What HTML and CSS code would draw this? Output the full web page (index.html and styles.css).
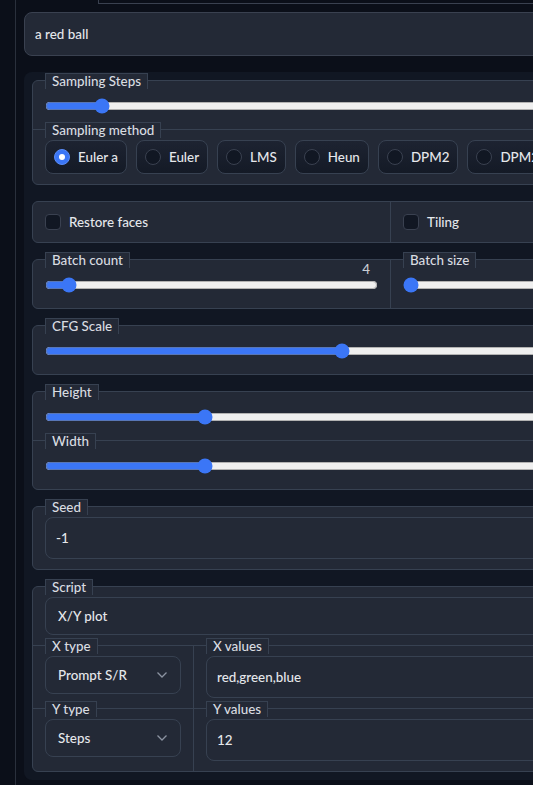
FILE: index.html
```html
<!DOCTYPE html>
<html lang="en">
<head>
<meta charset="utf-8">
<title>txt2img</title>
<link rel="stylesheet" href="styles.css">
</head>
<body>
<div class="frame">
  <div class="topstub"></div>
  <div class="prompt">a red ball</div>
  <div class="panel">
    <div class="form">
      <div class="block">
        <div class="blabel">Sampling Steps</div>
        <input class="range" type="range" min="0" max="682" value="49">
      </div>
      <div class="block">
        <div class="blabel">Sampling method</div>
        <div class="radios">
          <label class="radio selected"><span class="dot"></span>Euler a</label>
          <label class="radio"><span class="dot"></span>Euler</label>
          <label class="radio"><span class="dot"></span>LMS</label>
          <label class="radio"><span class="dot"></span>Heun</label>
          <label class="radio"><span class="dot"></span>DPM2</label>
          <label class="radio"><span class="dot"></span>DPM2 a</label>
          <label class="radio"><span class="dot"></span>DPM fast</label>
        </div>
      </div>
    </div>

    <div class="form cols">
      <label class="block check"><span class="box"></span>Restore faces</label>
      <label class="block check"><span class="box"></span>Tiling</label>
    </div>

    <div class="form cols">
      <div class="block">
        <div class="head"><div class="blabel">Batch count</div><span class="num">4</span></div>
        <input class="range" type="range" min="0" max="316" value="16">
      </div>
      <div class="block">
        <div class="head"><div class="blabel">Batch size</div><span class="num">1</span></div>
        <input class="range" type="range" min="0" max="325" value="0">
      </div>
    </div>

    <div class="form">
      <div class="block">
        <div class="blabel">CFG Scale</div>
        <input class="range" type="range" min="0" max="682" value="289">
      </div>
    </div>

    <div class="form">
      <div class="block">
        <div class="blabel">Height</div>
        <input class="range" type="range" min="0" max="682" value="152">
      </div>
      <div class="block">
        <div class="blabel">Width</div>
        <input class="range" type="range" min="0" max="682" value="152">
      </div>
    </div>

    <div class="form">
      <div class="block">
        <div class="blabel">Seed</div>
        <div class="textbox">-1</div>
      </div>
    </div>

    <div class="form">
      <div class="block">
        <div class="blabel">Script</div>
        <div class="select">X/Y plot</div>
      </div>
      <div class="row2">
        <div class="block">
          <div class="blabel">X type</div>
          <div class="select">Prompt S/R
            <svg class="chev" width="10" height="6" viewBox="0 0 10 6"><polyline points="0.5,0.5 5,5 9.5,0.5" fill="none" stroke="#8b93a1" stroke-width="1.3"/></svg>
          </div>
        </div>
        <div class="block">
          <div class="blabel">X values</div>
          <div class="textbox">red,green,blue</div>
        </div>
      </div>
      <div class="row2">
        <div class="block">
          <div class="blabel">Y type</div>
          <div class="select">Steps
            <svg class="chev" width="10" height="6" viewBox="0 0 10 6"><polyline points="0.5,0.5 5,5 9.5,0.5" fill="none" stroke="#8b93a1" stroke-width="1.3"/></svg>
          </div>
        </div>
        <div class="block">
          <div class="blabel">Y values</div>
          <div class="textbox">12</div>
        </div>
      </div>
    </div>
  </div>
</div>
</body>
</html>
```

FILE: styles.css
```css
html, body {
  margin: 0;
  padding: 0;
  background: #0b0f19;
  overflow: hidden;
  width: 533px;
  height: 785px;
}

body {
  font-family: Lato, "Liberation Sans", sans-serif;
  font-size: 13.4px;
  font-weight: 500;
  color: #e5e7eb;
}

.frame {
  margin-left: 15px;
  width: 741px;
  border-left: 1px solid #2a303c;
  padding-left: 8px;
  min-height: 785px;
}

.topstub {
  margin-left: 74px;
  height: 3px;
  border-left: 1px solid #3a4150;
  border-bottom: 1px solid #3a4150;
}

.prompt {
  margin-top: 8px;
  height: 42px;
  border: 1px solid #3a4150;
  border-radius: 8px;
  background: #232936;
  padding-left: 10px;
  display: flex;
  align-items: center;
  line-height: 16px;
}

.panel {
  margin-top: 16px;
  width: 724px;
  background: #111723;
  border-radius: 8px;
  padding: 8px;
  display: flex;
  flex-direction: column;
  gap: 16px;
}

.form {
  border: 1px solid #374151;
  border-radius: 6px;
  background: #232936;
  display: flex;
  flex-direction: column;
}

.form.cols {
  display: grid;
  grid-template-columns: 357px 1fr;
}

.block {
  padding: 0 12px;
  display: flex;
  flex-direction: column;
  align-items: stretch;
  min-width: 0;
}

.form > .block + .block {
  border-top: 1px solid #374151;
}

.form.cols > .block + .block {
  border-top: 0;
  border-left: 1px solid #374151;
}

.blabel {
  align-self: flex-start;
  margin-top: -8px;
  border: 1px solid #374151;
  border-bottom: 0;
  background: #232936;
  padding: 0 6px;
  line-height: 15px;
  height: 15px;
  color: #d9dce1;
  white-space: nowrap;
}

.head {
  display: flex;
  justify-content: space-between;
  align-items: flex-start;
  height: 16px;
  margin-top: -8px;
}

.head .blabel {
  margin-top: 0;
}

.num {
  margin-top: 9px;
  padding-right: 8px;
  line-height: 16px;
  color: #c9cdd4;
}

.range {
  display: block;
  margin: 9px 0 15px 0;
  padding: 0;
  height: 16px;
  width: 100%;
  accent-color: #3b76f6;
}

.radios {
  margin: 2px 0 10px 0;
  display: flex;
  gap: 9px;
  white-space: nowrap;
}

.radio {
  flex: none;
  height: 32px;
  border: 1px solid #374151;
  border-radius: 8px;
  background: linear-gradient(to bottom, #1d2331, #141a26);
  padding: 0 8px;
  display: flex;
  align-items: center;
  gap: 8px;
}

.dot {
  width: 14px;
  height: 14px;
  border-radius: 50%;
  border: 1px solid #3a4150;
  background: #111723;
  box-sizing: content-box;
}

.radio.selected .dot {
  background: #3b76f6;
  border-color: #5a8cf7;
  position: relative;
}

.radio.selected .dot::after {
  content: "";
  position: absolute;
  left: 4px;
  top: 4px;
  width: 6px;
  height: 6px;
  border-radius: 50%;
  background: #ffffff;
}

.check {
  flex-direction: row;
  align-items: center;
  gap: 8px;
  height: 40px;
}

.box {
  width: 14px;
  height: 14px;
  border: 1px solid #3a4150;
  border-radius: 4px;
  background: #111723;
  flex: none;
}

.textbox {
  margin: 2px 0 10px 0;
  height: 40px;
  border: 1px solid #374151;
  border-radius: 8px;
  padding: 0 10px;
  display: flex;
  align-items: center;
  white-space: nowrap;
}

.select {
  margin: 2px 0 10px 0;
  height: 36px;
  border: 1px solid #374151;
  border-radius: 8px;
  padding: 0 13px 0 12px;
  display: flex;
  align-items: center;
  justify-content: space-between;
  white-space: nowrap;
}

.chev {
  display: block;
}

.row2 {
  display: grid;
  grid-template-columns: 160px 1fr;
  border-top: 1px solid #374151;
}

.row2 > .block + .block {
  border-left: 1px solid #374151;
}
```
